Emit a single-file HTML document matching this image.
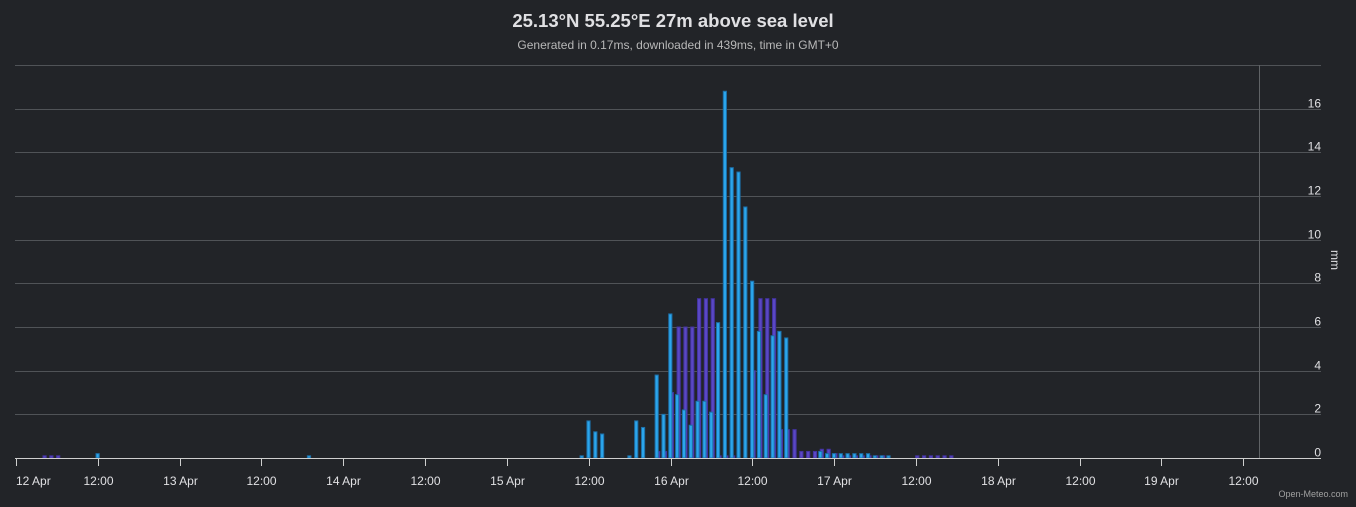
<!DOCTYPE html>
<html><head><meta charset="utf-8"><style>
body{margin:0;background:#222428;width:1356px;height:502px;overflow:hidden;font-family:"Liberation Sans",sans-serif}
svg text{font-family:"Liberation Sans",sans-serif}
</style></head><body>
<svg id="s" width="1356" height="502" xmlns="http://www.w3.org/2000/svg">
<rect width="1356" height="502" fill="#222428"/>
<text x="673" y="27" text-anchor="middle" fill="#e0e0e3" font-size="18.5" font-weight="bold">25.13°N 55.25°E 27m above sea level</text>
<text x="678" y="49" text-anchor="middle" fill="#b8b8b8" font-size="12">Generated in 0.17ms, downloaded in 439ms, time in GMT+0</text>
<g id="grid" stroke="#505357" stroke-width="1"></g>
<line x1="1259.5" y1="65" x2="1259.5" y2="458" stroke="#606366"/>
<g id="bars"></g>
<line x1="15" y1="458.5" x2="1321" y2="458.5" stroke="#cfcfcf"/>
<g id="ticks" stroke="#cfcfcf"></g>
<g id="xl" fill="#e0e0e3" font-size="12" text-anchor="middle"></g>
<g id="yl" fill="#e0e0e3" font-size="12" text-anchor="end"></g>
<text transform="translate(1331,260) rotate(90)" fill="#e0e0e3" font-size="12" text-anchor="middle">mm</text>
<text x="1348" y="497" text-anchor="end" fill="#a0a0a0" font-size="9">Open-Meteo.com</text>
</svg>
<script>
var ns="http://www.w3.org/2000/svg";
function el(p,t,a,txt){var e=document.createElementNS(ns,t);for(var k in a)e.setAttribute(k,a[k]);if(txt!=null)e.textContent=txt;document.getElementById(p).appendChild(e);}
for(var v=0;v<=18;v+=2){var y=Math.round(458-v*21.83)+0.5;if(v>0)el("grid","line",{x1:15,x2:1321,y1:y,y2:y});if(v<18)el("yl","text",{x:1321,y:y-2},String(v));}
var labels=["12 Apr","12:00","13 Apr","12:00","14 Apr","12:00","15 Apr","12:00","16 Apr","12:00","17 Apr","12:00","18 Apr","12:00","19 Apr","12:00"];
for(var i=0;i<16;i++){var x=Math.round(16+i*81.82)+0.5;el("ticks","line",{x1:x,x2:x,y1:458,y2:466});
el("xl","text",{x:i==0?16:x,y:485,"text-anchor":i==0?"start":"middle"},labels[i]);}
function bar(h,v,c,s,off){if(v<=0)return;var H=v*21.83;el("bars","rect",{x:16+h*6.818-1.8+off,y:458-H,width:3.2,height:H,fill:c,stroke:s,"stroke-width":1});}
var P={4:.1,5:.1,6:.1,94:.3,95:.3,96:3,97:6,98:6,99:6,100:7.3,101:7.3,102:7.3,103:.1,104:.1,105:.1,108:4,109:7.3,110:7.3,111:7.3,112:1.3,113:1.3,114:1.3,115:.3,116:.3,117:.3,118:.4,119:.4,120:.2,121:.1,122:.1,123:.1,124:.1,125:.1,126:.1,127:.1,132:.1,133:.1,134:.1,135:.1,136:.1,137:.1};
var B={12:.2,43:.1,83:.1,84:1.7,85:1.2,86:1.1,90:.1,91:1.7,92:1.4,94:3.8,95:2,96:6.6,97:2.9,98:2.2,99:1.5,100:2.6,101:2.6,102:2.1,103:6.2,104:16.8,105:13.3,106:13.1,107:11.5,108:8.1,109:5.8,110:2.9,111:5.6,112:5.8,113:5.5,118:.3,119:.2,120:.2,121:.2,122:.2,123:.2,124:.2,125:.2,126:.1,127:.1,128:.1};
for(var h in P)bar(+h,P[h],"#5a48c4","#4333a0",1.5);
for(var h in B)bar(+h,B[h],"#2ba6ec","#1d6fa8",0);
</script>
</body></html>
